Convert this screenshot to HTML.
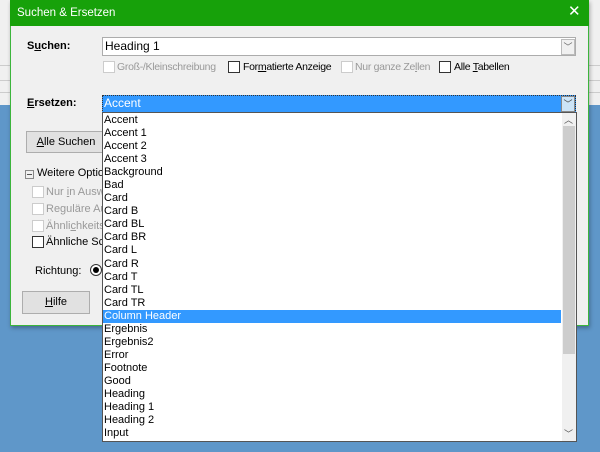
<!DOCTYPE html>
<html><head><style>
*{margin:0;padding:0;box-sizing:border-box}
body{width:600px;height:452px;position:relative;overflow:hidden;background:#5f97c9;font-family:"Liberation Sans",sans-serif;font-size:11px;color:#000}
.a{position:absolute}
.t{position:absolute;white-space:nowrap;line-height:13px}
.cb{position:absolute;width:12px;height:12px;border:1px solid #333;background:#fff}
.cbd{border-color:#ccc}
.g{color:#999}
u{text-decoration:underline}
.btn{position:absolute;background:#e1e1e1;border:1px solid #adadad;text-align:center;line-height:20px}
.row .t{letter-spacing:-0.3px;font-size:10.5px}
</style></head><body>
<div class="a" style="left:0;top:0;width:600px;height:105px;background:#f0f0f0"></div>
<div class="a" style="left:0;top:65px;width:600px;height:1px;background:#ccc"></div>
<div class="a" style="left:0;top:80px;width:600px;height:1px;background:#ccc"></div>
<div class="a" style="left:0;top:92px;width:600px;height:1px;background:#ccc"></div>
<!-- dialog -->
<div class="a" style="left:10px;top:0;width:579px;height:326px;background:#f0f0f0;border:1px solid #3cb53c;box-shadow:1px 2px 4px rgba(0,0,0,.3)"></div>
<div class="a" style="left:10px;top:0;width:579px;height:26px;background:#17a10a"></div>
<div class="t" style="left:17px;top:7px;color:#fff;font-size:11.5px">Suchen &amp; Ersetzen</div>
<div class="t" style="left:568px;top:5px;color:#fff;font-size:15px">✕</div>

<div class="t" style="left:27px;top:40px;font-weight:bold">S<u>u</u>chen:</div>
<div class="a" style="left:102px;top:37px;width:474px;height:19px;background:#fff;border:1px solid #acacac"></div>
<div class="t" style="left:105px;top:40px;font-size:12px">Heading 1</div>
<div class="a" style="left:561px;top:39px;width:14px;height:16px;border:1px solid #bbb;background:#f0f0f0;color:#666;font-size:9px;text-align:center;line-height:14px">﹀</div>

<div class="row">
<div class="cb cbd" style="left:103px;top:61px"></div><div class="t g" style="left:117px;top:61px">Groß-/Kleinschreibung</div>
<div class="cb" style="left:228px;top:61px"></div><div class="t" style="left:243px;top:61px">For<u>m</u>atierte Anzeige</div>
<div class="cb cbd" style="left:341px;top:61px"></div><div class="t g" style="left:355px;top:61px">Nur ganze Ze<u>l</u>len</div>
<div class="cb" style="left:439px;top:61px"></div><div class="t" style="left:454px;top:61px">Alle <u>T</u>abellen</div>
</div>

<div class="t" style="left:27px;top:97px;font-weight:bold"><u>E</u>rsetzen:</div>
<div class="a" style="left:102px;top:95px;width:474px;height:18px;background:#3399ff;border:1px dotted #333"></div>
<div class="t" style="left:104px;top:97px;color:#fff;font-size:12px">Accent</div>
<div class="a" style="left:561px;top:96px;width:14px;height:16px;border:1px solid #888;background:#cce4f7;color:#444;font-size:9px;text-align:center;line-height:14px">﹀</div>

<div class="btn" style="left:26px;top:131px;width:80px;height:22px"><u>A</u>lle Suchen</div>
<div class="a" style="left:25px;top:170px;width:9px;height:9px;border:1px solid #888"></div>
<div class="a" style="left:27px;top:174px;width:5px;height:1px;background:#555"></div>
<div class="t" style="left:37px;top:167px">Weitere Option</div>
<div class="cb cbd" style="left:32px;top:186px"></div><div class="t g" style="left:46px;top:186px">Nur <u>i</u>n Auswa</div>
<div class="cb cbd" style="left:32px;top:203px"></div><div class="t g" style="left:46px;top:203px">Reguläre Aus</div>
<div class="cb cbd" style="left:32px;top:220px"></div><div class="t g" style="left:46px;top:220px">Ähnli<u>c</u>hkeitss</div>
<div class="cb" style="left:32px;top:236px"></div><div class="t" style="left:46px;top:236px">Ähnliche Sch</div>
<div class="t" style="left:35px;top:265px">Richtung:</div>
<div class="a" style="left:90px;top:264px;width:12px;height:12px;border:1px solid #333;border-radius:50%;background:#fff"></div>
<div class="a" style="left:93px;top:267px;width:6px;height:6px;border-radius:50%;background:#000"></div>
<div class="btn" style="left:22px;top:291px;width:68px;height:23px"><u>H</u>ilfe</div>

<!-- list -->
<div class="a" style="left:102px;top:112px;width:475px;height:330px;background:#fff;border:1px solid #555"></div>
<div class="a" style="left:562px;top:113px;width:14px;height:328px;background:#f0f0f0"></div>
<div class="a" style="left:563px;top:126px;width:12px;height:228px;background:#cdcdcd"></div>
<div class="t" style="left:564px;top:114px;font-size:9px;color:#555">︿</div>
<div class="t" style="left:564px;top:428px;font-size:9px;color:#555">﹀</div>
<div class="a" style="left:103px;top:310px;width:458px;height:13px;background:#3399ff"></div>
<div class="a" style="left:104px;top:114px;line-height:13.05px;font-size:11px">
Accent<br>Accent 1<br>Accent 2<br>Accent 3<br>Background<br>Bad<br>Card<br>Card B<br>Card BL<br>Card BR<br>Card L<br>Card R<br>Card T<br>Card TL<br>Card TR<br><span style="color:#fff">Column Header</span><br>Ergebnis<br>Ergebnis2<br>Error<br>Footnote<br>Good<br>Heading<br>Heading 1<br>Heading 2<br>Input
</div>
</body></html>
